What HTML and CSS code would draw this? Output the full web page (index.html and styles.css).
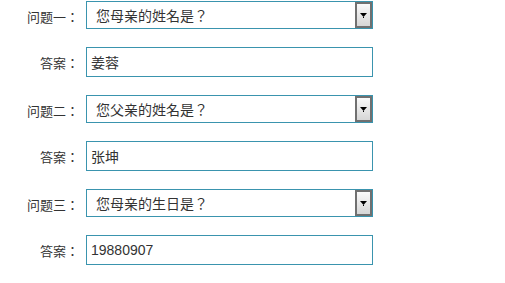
FILE: index.html
```html
<!DOCTYPE html>
<html lang="zh-TW">
<head>
    <meta charset="UTF-8">
    <title>密保问题</title>
    <link rel="stylesheet" href="styles.css">
</head>
<body>
    <form class="safe-form">
        <div class="form-row">
            <label>问题一：</label>
            <div class="select-box">
                <span class="select-text">您母亲的姓名是？</span>
                <span class="select-btn">
                    <svg width="7" height="5" viewBox="0 0 7 5"><path d="M0 0H7L3.5 4Z M3 4H4V5H3Z" fill="#000"/></svg>
                </span>
            </div>
        </div>
        <div class="form-row">
            <label class="label-answer">答案：</label>
            <input type="text" class="text-input" value="姜蓉">
        </div>

        <div class="form-row">
            <label>问题二：</label>
            <div class="select-box">
                <span class="select-text">您父亲的姓名是？</span>
                <span class="select-btn">
                    <svg width="7" height="5" viewBox="0 0 7 5"><path d="M0 0H7L3.5 4Z M3 4H4V5H3Z" fill="#000"/></svg>
                </span>
            </div>
        </div>
        <div class="form-row">
            <label class="label-answer">答案：</label>
            <input type="text" class="text-input" value="张坤">
        </div>

        <div class="form-row">
            <label>问题三：</label>
            <div class="select-box">
                <span class="select-text">您母亲的生日是？</span>
                <span class="select-btn">
                    <svg width="7" height="5" viewBox="0 0 7 5"><path d="M0 0H7L3.5 4Z M3 4H4V5H3Z" fill="#000"/></svg>
                </span>
            </div>
        </div>
        <div class="form-row">
            <label class="label-answer">答案：</label>
            <input type="text" class="text-input" value="19880907">
        </div>
    </form>
</body>
</html>
```

FILE: styles.css
```css
body {
    margin: 0;
    background-color: #fff;
    font-family: "Liberation Sans", "Noto Sans CJK TC", sans-serif;
    color: #333;
}
.safe-form {
    padding-top: 1px;
}
.form-row {
    display: flex;
    align-items: center;
    margin-bottom: 18px;
}
.form-row label {
    width: 79px;
    margin-right: 7px;
    padding-top: 5px;
    text-align: right;
    font-size: 13px;
    line-height: 16px;
    color: #333;
}
.form-row .label-answer {
    padding-top: 3px;
}
.select-box {
    display: flex;
    align-items: center;
    width: 287px;
    height: 28px;
    border: 1px solid #3a94ae;
    box-sizing: border-box;
    background-color: #fff;
}
.select-text {
    flex: 1;
    padding-left: 9px;
    font-size: 14px;
    color: #333;
}
.select-btn {
    display: flex;
    align-items: center;
    justify-content: center;
    width: 17px;
    height: 26px;
    border: 2px solid #707070;
    box-sizing: border-box;
    background: linear-gradient(#fafafa, #d6d6d6);
}
.text-input {
    width: 287px;
    height: 30px;
    margin: 0;
    padding: 0 4px;
    border: 1px solid #3a94ae;
    box-sizing: border-box;
    font-family: "Liberation Sans", "Noto Sans CJK TC", sans-serif;
    font-size: 14px;
    color: #333;
    outline: none;
}
```
